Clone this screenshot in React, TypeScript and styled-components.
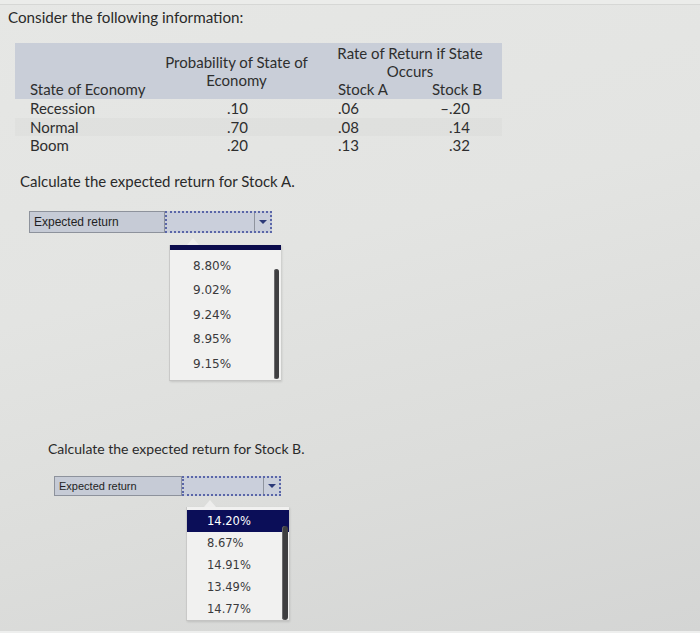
import React from 'react';
import styled, { createGlobalStyle } from 'styled-components';

const Global = createGlobalStyle`
  html, body { margin: 0; padding: 0; }
  body { width: 700px; height: 633px; overflow: hidden; background: #e2e3e1; }
`;

const Page = styled.div`
  width: 700px;
  height: 633px;
  box-sizing: border-box;
  overflow: hidden;
  display: flex;
  flex-direction: column;
  align-items: flex-start;
  background: linear-gradient(165deg, #e6e7e5 0%, #e3e4e2 40%, #dcdddb 70%, #d4d5d4 100%);
  border-bottom: 2px solid #eeefee;
  font-family: Lato, "Open Sans", sans-serif;
  color: #303030;
`;

const TopEdge = styled.div`
  align-self: stretch;
  height: 4px;
  background: #ebecea;
  border-bottom: 1px solid #d6d7d5;
`;

const Title = styled.div`
  margin: 4px 0 0 8px;
  font-size: 15.2px;
  line-height: 17px;
  color: #2a2a2a;
`;

const COLS = '140px 163px 92px 92px';

const Table = styled.div`
  margin: 17px 0 0 15px;
  width: 487px;
  display: flex;
  flex-direction: column;
  font-size: 15px;
  color: #2e2e2e;
`;

const HeadBand = styled.div`
  display: grid;
  grid-template-columns: ${COLS};
  grid-template-rows: 18px 19px 18px;
  padding-bottom: 1px;
  background: #c9ced8;
  line-height: 18px;
`;

const HeadCell = styled.div<{ $col: string; $row: string; $align?: string; $pad?: string }>`
  grid-column: ${(p) => p.$col};
  grid-row: ${(p) => p.$row};
  text-align: ${(p) => p.$align || 'left'};
  padding: ${(p) => p.$pad || '0'};
  align-self: center;
  white-space: nowrap;
`;

const BodyRow = styled.div<{ $striped?: boolean }>`
  display: grid;
  grid-template-columns: ${COLS};
  height: 18.5px;
  line-height: 18.5px;
  background: ${(p) => (p.$striped ? 'rgba(0,0,0,0.02)' : 'transparent')};
`;

const BodyCell = styled.div<{ $align?: string; $pad?: string }>`
  text-align: ${(p) => p.$align || 'left'};
  padding: ${(p) => p.$pad || '0'};
  white-space: nowrap;
`;

const Prompt = styled.div<{ $top: number; $left: number; $size: number }>`
  margin: ${(p) => p.$top}px 0 0 ${(p) => p.$left}px;
  font-size: ${(p) => p.$size}px;
  line-height: 18px;
  color: #2a2a2a;
`;

const DropRow = styled.div<{ $top: number; $left: number }>`
  margin: ${(p) => p.$top}px 0 0 ${(p) => p.$left}px;
  display: flex;
  align-items: stretch;
`;

const LabelBox = styled.div<{ $w: number; $h: number; $size: number }>`
  width: ${(p) => p.$w}px;
  height: ${(p) => p.$h}px;
  box-sizing: border-box;
  display: flex;
  align-items: center;
  padding-left: 4px;
  background: #c6cbd6;
  border: 1px solid #8d929c;
  font-family: "Liberation Sans", Arial, sans-serif;
  font-size: ${(p) => p.$size}px;
  color: #1f1f24;
`;

const SelectBox = styled.div<{ $w: number; $h: number }>`
  width: ${(p) => p.$w}px;
  height: ${(p) => p.$h}px;
  box-sizing: border-box;
  display: flex;
  justify-content: flex-end;
  background: #cacfdb;
  border: 2px dotted #5a66a8;
`;

const ArrowCell = styled.div`
  width: 15px;
  display: flex;
  align-items: center;
  justify-content: center;
  border-left: 1px solid #8f949e;
`;

const ArrowTri = styled.div`
  width: 0;
  height: 0;
  border-left: 4px solid transparent;
  border-right: 4px solid transparent;
  border-top: 4px solid #2c3a78;
`;

const ListBox = styled.div<{ $top: number; $left: number; $w: number; $h: number }>`
  position: relative;
  margin: ${(p) => p.$top}px 0 0 ${(p) => p.$left}px;
  width: ${(p) => p.$w}px;
  height: ${(p) => p.$h}px;
  box-sizing: border-box;
  background: #f1f1f0;
  border-left: 1px solid #c9c9c8;
  border-bottom: 1px solid #c4c4c3;
  box-shadow: 1px 1px 2px rgba(0, 0, 0, 0.12);
  display: flex;
  flex-direction: column;
  &::before {
    content: '';
    position: absolute;
    left: 17px;
    top: -7px;
    border-left: 6px solid transparent;
    border-right: 6px solid transparent;
    border-bottom: 7px solid #eeeeed;
  }
`;

const TopBar = styled.div`
  height: 5px;
  background: #0b0c4c;
`;

const Options = styled.div<{ $padTop: number }>`
  padding-top: ${(p) => p.$padTop}px;
  display: flex;
  flex-direction: column;
`;

const Option = styled.div<{ $h: number; $pad: number; $size: number; $active?: boolean }>`
  height: ${(p) => p.$h}px;
  line-height: ${(p) => p.$h}px;
  padding-left: ${(p) => p.$pad}px;
  font-family: "DejaVu Sans", Verdana, sans-serif;
  font-size: ${(p) => p.$size}px;
  color: ${(p) => (p.$active ? '#ffffff' : '#3a3a3c')};
  background: ${(p) => (p.$active ? '#0b0e58' : 'transparent')};
`;

const Scrollbar = styled.div<{ $top: number; $bottom: number; $right: number; $w: number }>`
  position: absolute;
  top: ${(p) => p.$top}px;
  bottom: ${(p) => p.$bottom}px;
  right: ${(p) => p.$right}px;
  width: ${(p) => p.$w}px;
  border-radius: 3px;
  background: #3e3e40;
  box-shadow: inset 1px 0 0 #6a6a6c;
`;

const optionsA = ['8.80%', '9.02%', '9.24%', '8.95%', '9.15%'];
const optionsB = ['14.20%', '8.67%', '14.91%', '13.49%', '14.77%'];

const rows = [
  { state: 'Recession', p: '.10', a: '.06', b: '–.20' },
  { state: 'Normal', p: '.70', a: '.08', b: '.14' },
  { state: 'Boom', p: '.20', a: '.13', b: '.32' },
];

export default function App() {
  return (
    <Page>
      <Global />
      <TopEdge />
      <Title>Consider the following information:</Title>
      <Table>
        <HeadBand>
          <HeadCell $col="1" $row="3" $pad="0 0 0 15px">State of Economy</HeadCell>
          <HeadCell $col="2" $row="1 / 4" $align="center">
            Probability of State of
            <br />
            Economy
          </HeadCell>
          <HeadCell $col="3 / 5" $row="1 / 3" $align="center">
            Rate of Return if State
            <br />
            Occurs
          </HeadCell>
          <HeadCell $col="3" $row="3" $pad="0 0 0 20px">Stock A</HeadCell>
          <HeadCell $col="4" $row="3" $pad="0 0 0 22px">Stock B</HeadCell>
        </HeadBand>
        {rows.map((r, i) => (
          <BodyRow key={r.state} $striped={i === 1}>
            <BodyCell $pad="0 0 0 15px">{r.state}</BodyCell>
            <BodyCell $align="right" $pad="0 70px 0 0">{r.p}</BodyCell>
            <BodyCell $pad="0 0 0 20px">{r.a}</BodyCell>
            <BodyCell $align="right" $pad="0 32px 0 0">{r.b}</BodyCell>
          </BodyRow>
        ))}
      </Table>

      <Prompt $top={17} $left={20} $size={15}>Calculate the expected return for Stock A.</Prompt>
      <DropRow $top={21} $left={29}>
        <LabelBox $w={136} $h={22} $size={12}>Expected return</LabelBox>
        <SelectBox $w={107} $h={22}>
          <ArrowCell>
            <ArrowTri />
          </ArrowCell>
        </SelectBox>
      </DropRow>
      <ListBox $top={12} $left={169} $w={112} $h={136}>
        <TopBar />
        <Options $padTop={4}>
          {optionsA.map((o) => (
            <Option key={o} $h={24.5} $pad={23} $size={12}>{o}</Option>
          ))}
        </Options>
        <Scrollbar $top={24} $bottom={1} $right={2} $w={5} />
      </ListBox>

      <Prompt $top={59} $left={48} $size={14}>Calculate the expected return for Stock B.</Prompt>
      <DropRow $top={18} $left={54}>
        <LabelBox $w={128} $h={20} $size={11}>Expected return</LabelBox>
        <SelectBox $w={99} $h={20}>
          <ArrowCell>
            <ArrowTri />
          </ArrowCell>
        </SelectBox>
      </DropRow>
      <ListBox $top={11} $left={186} $w={103} $h={114}>
        <Options $padTop={3}>
          {optionsB.map((o, i) => (
            <Option key={o} $h={22} $pad={20} $size={11.5} $active={i === 0}>{o}</Option>
          ))}
        </Options>
        <Scrollbar $top={19} $bottom={0} $right={1} $w={6} />
      </ListBox>
    </Page>
  );
}
